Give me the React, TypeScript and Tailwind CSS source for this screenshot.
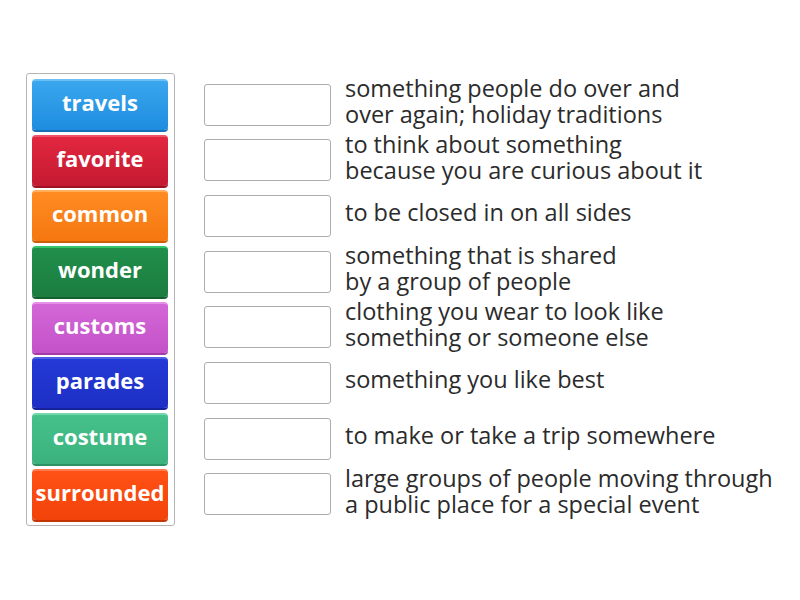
import React from "react"

const words = [
  { label: "travels", cls: "bg-gradient-to-b from-[#3aa6ee] to-[#1d8ddf] border-t-[#6cc0f5] shadow-[0_2px_0_#1570b8]" },
  { label: "favorite", cls: "bg-gradient-to-b from-[#e2273f] to-[#c41a32] border-t-[#ee5468] shadow-[0_2px_0_#9e1226]" },
  { label: "common", cls: "bg-gradient-to-b from-[#ff8c22] to-[#f5770f] border-t-[#ffae5c] shadow-[0_2px_0_#cc5e06]" },
  { label: "wonder", cls: "bg-gradient-to-b from-[#218f4b] to-[#1b7d40] border-t-[#36c46a] shadow-[0_2px_0_#13602f]" },
  { label: "customs", cls: "bg-gradient-to-b from-[#d467d8] to-[#c352c8] border-t-[#e590e8] shadow-[0_2px_0_#a33ba8]" },
  { label: "parades", cls: "bg-gradient-to-b from-[#2439d6] to-[#1d2fc4] border-t-[#4d60e6] shadow-[0_2px_0_#15229a]" },
  { label: "costume", cls: "bg-gradient-to-b from-[#46c18b] to-[#3bb27d] border-t-[#74d7ab] shadow-[0_2px_0_#2b9263]" },
  { label: "surrounded", cls: "bg-gradient-to-b from-[#ff5015] to-[#f2440a] border-t-[#ff7a4a] shadow-[0_2px_0_#c23505]" },
]

const defs = [
  ["something people do over and", "over again; holiday traditions"],
  ["to think about something", "because you are curious about it"],
  ["to be closed in on all sides"],
  ["something that is shared", "by a group of people"],
  ["clothing you wear to look like", "something or someone else"],
  ["something you like best"],
  ["to make or take a trip somewhere"],
  ["large groups of people moving through", "a public place for a special event"],
]

export default function App() {
  return (
    <div className="w-[800px] h-[600px] bg-white font-['Open_Sans',sans-serif] pt-[73px] pl-[26px] flex items-start">
      {/* word tiles */}
      <div className="border border-[#b4b4b4] rounded-[3px] pt-[5px] pb-[5px] pl-[5px] pr-[6px] flex flex-col gap-[4.7px]">
        {words.map((w) => (
          <div
            key={w.label}
            className={`w-[136px] h-[51px] rounded-[4px] border-t-2 pb-[6px] flex items-center justify-center text-white font-bold text-[22px] ${w.cls}`}
          >
            {w.label}
          </div>
        ))}
      </div>

      {/* answer boxes + definitions */}
      <div className="ml-[29px] mt-[6px] flex flex-col gap-[4.7px]">
        {defs.map((d, i) => (
          <div key={i} className="h-[51px] flex items-center">
            <div className="w-[127px] h-[42px] border border-[#adadad] rounded-[3px] bg-white" />
            <div className="ml-[14px] pb-[7px] text-[23.5px] leading-[26px] text-[#2b2b2b] whitespace-nowrap">
              {d.map((line) => (
                <div key={line}>{line}</div>
              ))}
            </div>
          </div>
        ))}
      </div>
    </div>
  )
}
